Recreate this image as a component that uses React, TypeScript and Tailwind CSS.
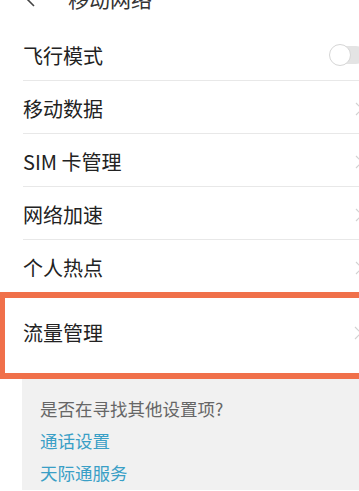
import React from 'react';

const rows = ['移动数据', 'SIM 卡管理', '网络加速', '个人热点'];

const Chevron = () => (
  <svg width="8" height="14" viewBox="0 0 8 14" className="-mr-[4px] shrink-0">
    <path d="M1 1l6 6-6 6" fill="none" stroke="#d2d2d2" strokeWidth="1.2" />
  </svg>
);

export default function App() {
  return (
    <div
      className="w-[359px] h-[491px] overflow-hidden bg-white text-[#222]"
      style={{ fontFamily: '"Noto Sans CJK SC", "Noto Sans", sans-serif' }}
    >
      {/* header, mostly scrolled off the top */}
      <div className="h-[28px] relative overflow-hidden">
        <div className="absolute left-[24px] -top-[14px] flex items-center gap-[32px] text-[21px] leading-[24px] text-[#333]">
          <svg width="12" height="20" viewBox="0 0 12 20">
            <path d="M10 2L2 10l8 8" fill="none" stroke="#444" strokeWidth="1.6" />
          </svg>
          <span>移动网络</span>
        </div>
      </div>

      <div className="pl-[23px]">
        <div className="h-[53px] flex items-center justify-between border-b border-[#e8e8e8] pt-[4px]">
          <span className="text-[20px]">飞行模式</span>
          <div className="relative w-[36px] h-[22px] -mr-[6px] -mt-[3px]">
            <div className="absolute left-[6px] top-[2px] right-0 h-[18px] rounded-full bg-[#e4e4e4]" />
            <div className="absolute left-0 top-0 w-[22px] h-[22px] rounded-full bg-white border border-[#d6d6d6]" />
          </div>
        </div>
        {rows.map((label, i) => (
          <div
            key={label}
            className={
              i === rows.length - 1
                ? 'h-[52px] flex items-center justify-between pt-[4px]'
                : 'h-[53px] flex items-center justify-between border-b border-[#e8e8e8] pt-[4px]'
            }
          >
            <span className="text-[20px]">{label}</span>
            <Chevron />
          </div>
        ))}
      </div>

      {/* highlighted row, runs past the right edge */}
      <div className="w-[372px] h-[87px] -ml-[1px] border-[6px] border-[#f0704a] bg-white flex items-center justify-between pl-[18px] pr-[7px] pb-[6px]">
        <span className="text-[20px]">流量管理</span>
        <Chevron />
      </div>

      <div className="ml-[22px] h-[111px] bg-[#f1f1f1] pl-[18px] pt-[14px] text-[17.5px] leading-[32px]">
        <p className="text-[#666]">是否在寻找其他设置项?</p>
        <p className="text-[#3a9fc6]">通话设置</p>
        <p className="text-[#3a9fc6]">天际通服务</p>
      </div>
    </div>
  );
}
